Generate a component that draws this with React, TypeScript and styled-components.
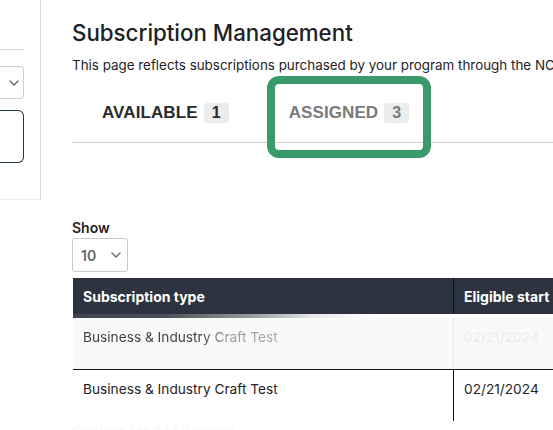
import React from 'react';
import styled, { createGlobalStyle } from 'styled-components';

const COLUMNS = ['Subscription type', 'Eligible start', 'Eligible end'];

const ROWS = [
  { type: 'Business & Industry Craft Test', start: '02/21/2024', end: '02/21/2025', faded: true },
  { type: 'Business & Industry Craft Test', start: '02/21/2024', end: '02/21/2025', faded: false },
];

const TABS = [
  { label: 'AVAILABLE', count: 1, active: true },
  { label: 'ASSIGNED', count: 3, active: false },
];

const Chevron = () => (
  <svg width="10" height="6" viewBox="0 0 10 6" fill="none">
    <path d="M1 1l4 4 4-4" stroke="#666" strokeWidth="1.4" strokeLinecap="round" strokeLinejoin="round" />
  </svg>
);

const App = () => {
  return (
    <>
      <GlobalStyle />
      <Page>
        <Sidebar>
          <SideDivider />
          <SideSelect>
            <Chevron />
          </SideSelect>
          <SideBox />
        </Sidebar>
        <Main>
          <Title>Subscription Management</Title>
          <Subtitle>
            This page reflects subscriptions purchased by your program through the NCCER store and
            assigned to users.
          </Subtitle>
          <Tabs>
            {TABS.map((tab) => (
              <Tab key={tab.label} active={tab.active}>
                {tab.label}
                <Badge>{tab.count}</Badge>
              </Tab>
            ))}
            <Highlight />
          </Tabs>
          <ShowLabel>Show</ShowLabel>
          <PageSize>
            <span>10</span>
            <Chevron />
          </PageSize>
          <Table>
            <HeadRow>
              {COLUMNS.map((col, idx) => (
                <HeadCell key={col} first={idx === 0}>
                  {col}
                </HeadCell>
              ))}
            </HeadRow>
            {ROWS.map((row, idx) => (
              <Row key={idx} faded={row.faded}>
                <Cell first faded={row.faded}>
                  {row.type}
                </Cell>
                <Cell faded={row.faded} ghost={row.faded}>
                  {row.start}
                </Cell>
                <Cell faded={row.faded} ghost={row.faded}>
                  {row.end}
                </Cell>
              </Row>
            ))}
          </Table>
          <Footer>Showing 1 to 2 of 2 entries</Footer>
        </Main>
      </Page>
    </>
  );
};

const GlobalStyle = createGlobalStyle`
  html, body {
    margin: 0;
    padding: 0;
    background: #fff;
    overflow: hidden;
  }
  body {
    font-family: Inter, "Noto Sans", Arial, sans-serif;
    color: #1f2328;
  }
`;

const Page = styled.div`
  display: flex;
  align-items: flex-start;
  width: 553px;
  height: 430px;
  overflow: hidden;
`;

const Sidebar = styled.aside`
  flex: 0 0 41px;
  height: 200px;
  box-sizing: border-box;
  border-right: 1px solid #d6d6d6;
  border-bottom: 1px solid #ececec;
  padding-right: 16px;
  display: flex;
  flex-direction: column;
`;

const SideDivider = styled.div`
  margin-top: 49px;
  height: 1px;
  background: #d4d4d4;
`;

const SideSelect = styled.div`
  margin-top: 16px;
  height: 33px;
  box-sizing: border-box;
  border: 1px solid #d0d0d0;
  border-left: none;
  border-radius: 0 4px 4px 0;
  display: flex;
  align-items: center;
  justify-content: flex-end;
  padding-right: 4px;
`;

const SideBox = styled.div`
  margin-top: 11px;
  height: 53px;
  box-sizing: border-box;
  border: 1px solid #1f3a3e;
  border-left: none;
  border-radius: 0 6px 6px 0;
`;

const Main = styled.main`
  flex: 0 0 auto;
  margin-left: 31px;
  padding-top: 19px;
  width: 560px;
  display: flex;
  flex-direction: column;
`;

const Title = styled.h1`
  margin: 0;
  font-size: 22.3px;
  font-weight: 500;
  line-height: 28px;
  color: #1d2126;
  white-space: nowrap;
`;

const Subtitle = styled.p`
  margin: 10px 0 0;
  font-size: 13.4px;
  line-height: 16px;
  color: #1f2328;
  white-space: nowrap;
`;

const Tabs = styled.div`
  position: relative;
  display: flex;
  height: 58px;
  margin-top: 11px;
  border-bottom: 1px solid #cfcfcf;
`;

const Tab = styled.div<{ active: boolean }>`
  display: flex;
  align-items: center;
  gap: 6px;
  padding: 0 30px;
  font-size: 17px;
  font-weight: 700;
  letter-spacing: 0.1px;
  color: ${(p) => (p.active ? '#2b2b2b' : '#7a7a7a')};
  font-family: "Liberation Sans", Arial, sans-serif;
`;

const Badge = styled.span`
  display: inline-flex;
  align-items: center;
  justify-content: center;
  min-width: 25px;
  height: 20px;
  border-radius: 3px;
  background: #ececec;
  font-size: 16px;
  color: inherit;
`;

const Highlight = styled.div`
  position: absolute;
  left: 195px;
  top: -8px;
  width: 164px;
  height: 82px;
  box-sizing: border-box;
  border: 8px solid #3a9a6c;
  border-radius: 12px;
  pointer-events: none;
`;

const ShowLabel = styled.div`
  margin-top: 77px;
  font-size: 14px;
  font-weight: 600;
  line-height: 16px;
  color: #222;
`;

const PageSize = styled.div`
  margin-top: 2px;
  width: 56px;
  height: 34px;
  box-sizing: border-box;
  border: 1px solid #c9c9c9;
  border-radius: 3px;
  display: flex;
  align-items: center;
  justify-content: space-between;
  padding: 0 6px 0 8px;
  font-size: 14px;
  font-weight: 600;
  color: #666;
`;

const Table = styled.div`
  margin-top: 6px;
  margin-left: 1px;
  display: flex;
  flex-direction: column;
`;

const HeadRow = styled.div`
  display: grid;
  grid-template-columns: 380px 140px 140px;
  height: 40px;
  background: #2e343f;
  position: relative;
  &::after {
    content: '';
    position: absolute;
    left: 0;
    right: 0;
    bottom: 0;
    height: 4px;
    background: linear-gradient(90deg, #3f444d 0, #4a4f57 90px, #9a9ca0 180px, #e8e8e8 240px, #fff 300px);
  }
`;

const HeadCell = styled.div<{ first?: boolean }>`
  display: flex;
  align-items: center;
  padding: 0 10px 3px;
  font-size: 14px;
  font-weight: 700;
  color: #fff;
  white-space: nowrap;
  border-left: ${(p) => (p.first ? 'none' : '1px solid #111')};
`;

const Row = styled.div<{ faded: boolean }>`
  display: grid;
  grid-template-columns: 380px 140px 140px;
  height: 51px;
  background: ${(p) => (p.faded ? '#f9f9f9' : '#fff')};
  border-bottom: ${(p) => (p.faded ? '1px solid #111' : 'none')};
`;

const Cell = styled.div<{ first?: boolean; faded: boolean; ghost?: boolean }>`
  padding: 11px 10px 0;
  font-size: 13.7px;
  line-height: 16px;
  white-space: nowrap;
  color: ${(p) => (p.ghost ? '#ececec' : '#1f2328')};
  border-left: ${(p) => (p.first ? 'none' : p.faded ? '1px solid #ececec' : '1px solid #111')};
  ${(p) =>
    p.faded && p.first
      ? `
    background: linear-gradient(90deg, #3a3d42 0, #3a3d42 125px, #9a9a9a 155px, #a5a5a5 200px);
    -webkit-background-clip: text;
    background-clip: text;
    color: transparent;
  `
      : ''}
`;

const Footer = styled.div`
  margin-top: 2px;
  font-size: 13px;
  color: #f5f5f5;
`;

export default App;
